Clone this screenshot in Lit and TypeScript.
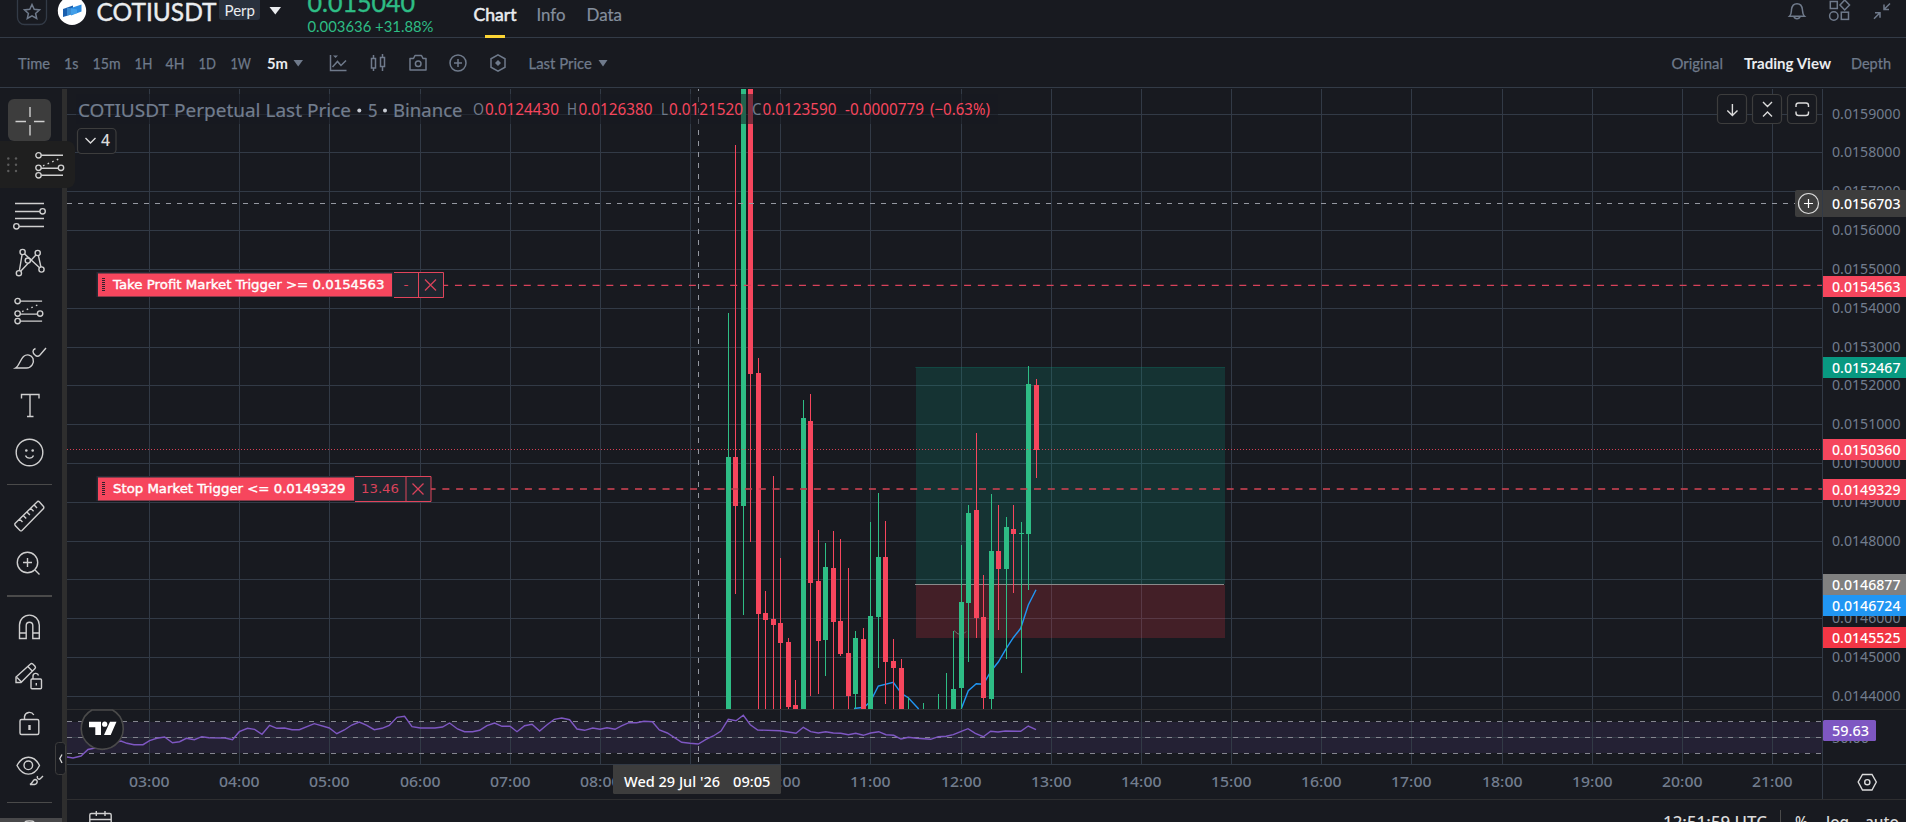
import { LitElement, html, svg, css } from "lit";
import { customElement } from "lit/decorators.js";

type Box = [number, number, number, number];

/** Text run fitted to a known width. */
const txt = (x: number, y: number, w: number, s: string, cls: string) =>
  svg`<text x=${x} y=${y} textLength=${w} lengthAdjust="spacingAndGlyphs" class=${cls}>${s}</text>`;

/** A slice of a bar or column; the content uses the page's coordinates. */
const cell = ([x, y, w, h]: Box, content: unknown) =>
  html`<svg class="cell" width=${w} height=${h} viewBox="${x} ${y} ${w} ${h}">${content}</svg>`;

const UP = "#2ebd85";
const DOWN = "#f6465d";

// x, wick top, wick bottom, body top, body bottom, rising
const CANDLES: number[][] = [
  [728, 313, 709, 457, 709, 1], [735, 145, 594, 457, 506, 0], [743, 89, 615, 89, 506, 1],
  [750, 89, 542, 89, 374, 0], [758, 358, 709, 373, 614, 0], [765, 591, 709, 613, 620, 0],
  [773, 476, 709, 619, 625, 0], [780, 558, 709, 623, 643, 0], [788, 638, 709, 642, 707, 0],
  [795, 680, 709, 705, 709, 0], [803, 400, 709, 418, 709, 1], [810, 394, 696, 421, 583, 0],
  [818, 530, 694, 581, 641, 0], [825, 543, 676, 567, 640, 1], [833, 531, 709, 568, 622, 0],
  [840, 539, 656, 621, 654, 0], [848, 568, 709, 653, 696, 0], [855, 631, 709, 638, 694, 1],
  [863, 628, 709, 639, 709, 0], [870, 522, 709, 616, 709, 1], [878, 493, 668, 557, 617, 1],
  [885, 521, 704, 557, 662, 0], [893, 639, 709, 661, 668, 0], [901, 659, 709, 668, 709, 0],
  [908, 697, 709, 709, 709, 1], [923, 703, 709, 709, 709, 1], [938, 694, 709, 709, 709, 1],
  [946, 673, 709, 709, 709, 1], [953, 631, 709, 689, 709, 1], [961, 545, 709, 602, 688, 1],
  [968, 505, 662, 513, 603, 1], [976, 433, 638, 510, 618, 0], [983, 575, 709, 617, 698, 0],
  [991, 494, 709, 551, 699, 1], [998, 505, 630, 551, 569, 0], [1006, 517, 659, 527, 569, 1],
  [1013, 505, 593, 529, 534, 0], [1021, 522, 673, 533, 534, 1], [1028, 366, 590, 384, 534, 1],
  [1036, 379, 478, 385, 450, 0],
];

const GRID_Y = [114, 152, 191, 230, 269, 308, 347, 385, 424, 463, 502, 541, 579, 618, 657, 696];
const GRID_X = Array.from({ length: 19 }, (_, i) => Math.floor(149.55 + i * 90.17));

const RSI =
  "67,757 73,758 81,756 88,749.5 96,747.7 104,749 112,743 121,741 127,743.3 134,744.7 143,744.7 149.6,740.7 156.8,738.3 164.6,737 172.5,742.7 179.6,741.7 186.4,738.3 194.3,739.7 201.8,736.7 209,737.7 225,738 232.5,739.7 239.3,731.7 247.5,728.3 254.6,729.3 262,734.3 269.6,725.3 276.8,728.3 284.6,728 292,729.7 299.3,729.7 314.3,723.7 329.3,728 336.8,733.7 344.3,730 351.8,725 359.3,722 366.8,725.3 374.3,729.7 382,728.3 389.3,725.3 397,717.3 404.6,716.3 412,726.7 420.4,728 435,728 442.5,727 449.6,723 457.5,729 464.6,731.7 472.5,731.7 479.6,730.3 487,725.7 494.6,723 502,726.3 510,726.3 517,731.7 524.6,725.7 532,724.3 539.6,731 546.8,725 554.3,719.3 561.8,718 569.6,719.7 577,729 584.6,730.3 592.7,728 600,729.3 607,727.7 615,729.3 622,725.7 629,722.7 636.7,722.7 644,721.3 652.3,721.7 659.3,730 667.3,733 681.7,742.3 690,743.3 698.3,744 706,739.3 713.3,736 721,731 728.3,719.3 736,720.7 743.3,715.3 750.3,724.7 757.7,730 780,730.7 796,733.3 803.3,727.3 810.7,731.7 818.3,733 825.7,731.7 833.3,733 840.7,733.3 848.3,734.7 855.7,733.3 863.3,735.3 870.7,733 878.7,731.7 886,734.7 893.7,735.3 901,739 908.3,737.3 916.7,738.3 930.7,739.3 938.3,736.7 946,736.3 953.3,734.7 961.3,731.3 968,728.7 975.3,733.3 983.3,736.7 990.7,731.3 998,732 1005.3,731 1020.7,731.3 1028.3,726 1036,729.7";

const MA1 = "854,708.5 864,707.3 870.3,701.7 878.3,686 893.3,682.3 901.3,693.3 908.3,697.7 918.7,709";
const MA2 = "961.3,708.7 968.3,690.7 976.3,683.7 983.3,684.3 991.3,670.7 998.3,662 1006.3,648.3 1013.3,637.7 1020.7,628.3 1028.3,605 1036,589.7";

const TAGS: [number, string, string][] = [
  [276, DOWN, "0.0154563"], [357, "#089981", "0.0152467"], [439, DOWN, "0.0150360"],
  [479, DOWN, "0.0149329"], [574, "#808080", "0.0146877"], [595, "#2196f3", "0.0146724"],
  [627, "#f23645", "0.0145525"],
];

const FIB = svg`<path d="M3 3.5H27.5M3 16.5H27.5M3 23.5H27.5" /><path d="M7.5 14L25 6.5" stroke-dasharray="1.6 3.4" />
  <g class="knot"><circle cx="3" cy="3.5" r="2.7" /><circle cx="3" cy="16" r="2.7" /><circle cx="25.5" cy="16" r="2.7" /><circle cx="3" cy="23.5" r="2.7" /></g>`;

@customElement("tool-rail")
class ToolRail extends LitElement {
  static styles = css`
    :host { display: flex; flex-direction: column; width: 62px; height: 733px; overflow: hidden; position: relative; }
    .cell { display: block; flex: none; fill: none; stroke: #cfcfcf; stroke-width: 1.4; }
    .knot { fill: #181a20; }
    .btn { fill: #3d3d3d; stroke: none; }
    .sep { stroke: none; fill: #4a4a4a; }
    .solid { fill: #cfcfcf; stroke: none; }
  `;

  render() {
    const c = (top: number, bottom: number, body: unknown) => cell([0, top, 62, bottom - top], body);
    return html`
      ${c(89, 145, svg`<rect x="8" y="99" width="43" height="42" rx="6" class="btn" />
        <path d="M30 107V117M30 125V135.500M15.500 121.500H26M34 121.500H44.500" />`)}
      ${c(145, 191, null)}
      ${c(191, 239, svg`<path d="M15 203.500H44M15 211.500H42M15 218.500H44M16 226.500H44" />
        <g class="knot"><circle cx="42.600" cy="211.300" r="2.700" /><circle cx="16.400" cy="226.300" r="2.700" /></g>`)}
      ${c(239, 286, svg`<path d="M19 273L22.500 252L41.500 269.500M37.800 253L41.500 269.500M19 273L37.800 253" />
        <g class="knot"><circle cx="22.600" cy="252" r="2.600" /><circle cx="37.700" cy="253" r="2.600" />
        <circle cx="27.800" cy="260.600" r="2.600" /><circle cx="18.900" cy="273.200" r="2.600" /><circle cx="41.500" cy="269.500" r="2.600" /></g>`)}
      ${c(286, 335, svg`<g transform="translate(14.600 297.600)">${FIB}</g>`)}
      ${c(335, 382, svg`<path d="M15.500 368C19 366 20 360 23.500 356.500C27 353.500 31.500 355 33 358.500C34.500 363 31.500 368 26.500 368ZM35.500 348.500C32 350 32.500 353 35 355C37 357 38.500 356.500 40 355L46 348" />`)}
      ${c(382, 429, svg`<path d="M21.500 398.500V394.500H39V398.500M30 394.500V416.500M27 416.500H33.500" />`)}
      ${c(429, 478, svg`<circle cx="29.500" cy="452.500" r="13.300" /><path d="M25.500 455.500C27 459 32 459 33.500 455.500" />
        <circle cx="26.300" cy="450.500" r="1.300" class="solid" /><circle cx="32.700" cy="450.500" r="1.300" class="solid" />`)}
      ${c(478, 490, svg`<rect x="7" y="484" width="45" height="1" class="sep" />`)}
      ${c(490, 540, svg`<path d="M15 523.500L37.500 501.500Q38.500 501 39.500 502L43.500 506.500Q44.200 507.500 43.500 508.500L22 530.500Q21 531.300 20 530.500L15.200 525.500Q14.600 524.500 15 523.500ZM19.500 519L22.500 522M23.200 515.500L26.200 518.500M26.900 512L29.900 515M30.600 508.300L33.600 511.300M34.200 505L37 508" />`)}
      ${c(540, 590, svg`<circle cx="27.500" cy="562.500" r="10.200" /><path d="M35 570L39.500 574.500M27.500 558V567M23 562.500H32" />`)}
      ${c(590, 601, svg`<rect x="7" y="595" width="45" height="2" class="sep" />`)}
      ${c(601, 652, svg`<path d="M19.500 638.500V625A9.800 9.800 0 0 1 39.300 625V638.500H32.800V625.500A3.300 3.300 0 0 0 26.200 625.500V638.500ZM19.500 633H26.200M32.800 633H39.300" />`)}
      ${c(652, 700, svg`<path d="M16 682.500V677L30.500 664Q31.500 663 32.800 664L35 666.200Q36 667.500 35 668.500L21 682.500ZM27.800 666.500L32.500 671.200M17 677.500L21.500 682" />
        <rect x="31" y="679" width="10.500" height="9.800" rx="1" /><path d="M33 679V676.500A2.800 2.800 0 0 1 38.500 675.500M36.300 683V685.500" />`)}
      ${c(700, 747, svg`<rect x="20" y="719.500" width="18.800" height="15" rx="1.500" /><path d="M24.500 719.500V716.500A5 5 0 0 1 33.800 715" />
        <path d="M29.500 725V730" stroke-width="2.400" />`)}
      ${c(747, 797, svg`<path d="M17 765.500C23 754.500 34 754.500 39.500 765.500C34 777 23 777 17 765.500Z" /><circle cx="28.300" cy="765.300" r="4.300" />
        <path d="M30 784.500C33 783 32.500 780 35 779.500C38 779.500 38 784 34.500 784.500ZM37.500 776C36.500 778.500 39 780 40.500 778.500L43 776" />`)}
      ${c(797, 822, svg`<rect x="7" y="802" width="45" height="1" class="sep" /><rect y="818" width="62" height="4" fill="#48484a" stroke="none" />
        <path d="M25 822C26 820.500 33 820.500 34 822" />`)}
    `;
  }
}

@customElement("price-chart")
class PriceChart extends LitElement {
  static styles = css`
    :host { display: block; }
    .cell { display: block; }
    text { font-family: "Noto Sans", sans-serif; white-space: pre; }
    .axis { font-size: 15.200px; fill: #727d8e; }
    .time { font-size: 15px; font-weight: 500; fill: #727d8e; }
    .tag { font-size: 15.200px; font-weight: 500; fill: #fff; }
    .name { font-size: 18.500px; fill: #727d8e; stroke: #727d8e; stroke-width: 0.2; }
    .key { font-size: 15.800px; fill: #6f7a8b; }
    .val { font-size: 15.800px; fill: #f6465d; }
    .four { font-size: 15.500px; fill: #dbdbdb; font-weight: 500; }
    .order { font-family: "DejaVu Sans", sans-serif; font-size: 13px; fill: #fff; stroke: #fff; stroke-width: 0.4; }
    .qty { font-family: "DejaVu Sans", sans-serif; font-size: 13px; fill: #d8425a; }
    .grid { fill: #323a46; }
    .box { fill: #181a20; stroke: #3d3d3d; stroke-width: 1.200; }
    .ink { fill: none; stroke: #dbdbdb; stroke-width: 1.400; }
    .ref { stroke: #85868f; stroke-dasharray: 5 6; }
    .cross { stroke: #9598a1; stroke-dasharray: 5 6; }
  `;

  private order(y: number, redW: number, textW: number, label: string, qtyX: number, sepX: number, endX: number, qty: unknown) {
    return svg`
      <rect x="96.500" y=${y - 1} width=${redW + 3} height="25" fill="#262c37" />
      <rect x="98" y=${y + 0.5} width=${redW} height="23" fill=${DOWN} />
      <path d="M103.500 ${y + 5}V${y + 19}" stroke="#33202c" stroke-width="3" stroke-dasharray="1 1" />
      ${txt(113, y + 16, textW, label, "order")}
      <rect x=${qtyX} y=${y - 0.500} width=${endX - qtyX} height="25" fill="#1f262f" />
      <path d="M${qtyX} ${y - 0.5}H${endX}V${y + 24.5}H${qtyX}M${sepX} ${y - 0.5}V${y + 24.5}" fill="none" stroke="#e0445b" />
      ${qty}
      <path d="M${endX - 18.500} ${y + 6.500}L${endX - 7.500} ${y + 17.500}M${endX - 7.500} ${y + 6.500}L${endX - 18.500} ${y + 17.500}" stroke="#d8425a" stroke-width="1.300" />`;
  }

  render() {
    return cell([67, 88, 1839, 712], svg`
      <rect x="67" y="722" width="1755" height="31" fill="#7e57c2" fill-opacity="0.130" />
      ${GRID_X.map((x) => svg`<rect x=${x} y="89" width="1" height="675" class="grid" />`)}
      ${GRID_Y.map((y) => svg`<rect x="67" y=${y} width="1755" height="1" class="grid" />`)}
      <rect x="67" y="737" width="1755" height="1" class="grid" />
      <rect x="67" y="709" width="1839" height="1" fill="#2e2e30" />
      <rect x="67" y="764" width="1839" height="1" class="grid" />
      <rect x="67" y="799" width="1839" height="1" fill="#2e2e30" />

      <rect x="916" y="367" width="309" height="217" fill="#089981" fill-opacity="0.200" />
      <rect x="915" y="367" width="310" height="1" fill="#089981" fill-opacity="0.200" />
      <rect x="916" y="585" width="309" height="53" fill="#f23645" fill-opacity="0.200" />
      <rect x="915" y="584" width="309" height="1" fill="#8a8a8a" />
      <polyline points="954,630.500 958,634 964,633.500 966,631.500" fill="none" stroke="#70706c" />

      <g fill="none" stroke="#2196f3" stroke-width="1.400"><polyline points=${MA1} /><polyline points=${MA2} /></g>
      ${CANDLES.map(([x, wt, wb, bt, bb, up]) => svg`<g fill=${up ? UP : DOWN}>
        <rect x=${x} y=${wt} width="1" height=${wb - wt} /><rect x=${x - 2} y=${bt} width="5" height=${bb - bt} /></g>`)}

      <path d="M67 449.500H1822" stroke="#f6465d" stroke-opacity="0.850" stroke-dasharray="1 2" />
      <path d="M443 285.400H1822" stroke="#d8425a" stroke-width="1.250" stroke-dasharray="7 6.760" stroke-dashoffset="1.800" />
      <path d="M431 489H1822" stroke="#c0404f" stroke-opacity="0.850" stroke-width="2" stroke-dasharray="7 6.760" stroke-dashoffset="2.400" />
      <path d="M67 203.500H1795" class="cross" />
      <path d="M698.500 89V762" class="cross" stroke-dashoffset="3" />

      <path d="M67 721.500H1822M67 737.500H1822M67 753.500H1822" class="ref" />
      <polyline points=${RSI} fill="none" stroke="#7e57c2" stroke-width="1.400" />
      <g><path d="M92 710H112.500A21 21 0 1 1 92 710Z" fill="#181a20" stroke="#4a4a4a" stroke-width="1.600" />
        <rect x="86" y="708" width="32" height="1" fill="#181a20" />
        <path d="M89 721.700H101V735H95.300V727.300H89ZM110 721.700H116.500L110.700 735H104Z" fill="#fff" /><circle cx="104.700" cy="724.200" r="2.600" fill="#fff" /></g>

      <rect x="76" y="94" width="922" height="30" fill="#181a20" fill-opacity="0.550" />
      ${txt(78, 116.5, 273, "COTIUSDT Perpetual Last Price", "name")}
      <circle cx="359.300" cy="110.500" r="2" fill="#c8ccd4" /><circle cx="385" cy="110.500" r="2" fill="#c8ccd4" />
      ${txt(368, 116.5, 9.5, "5", "name")}${txt(393, 116.5, 69.5, "Binance", "name")}
      ${txt(473, 115, 11, "O", "key")}${txt(485, 115, 74, "0.0124430", "val")}
      ${txt(567, 115, 10, "H", "key")}${txt(578.5, 115, 74, "0.0126380", "val")}
      ${txt(661, 115, 7, "L", "key")}${txt(669, 115, 74, "0.0121520", "val")}
      ${txt(752, 115, 9.5, "C", "key")}${txt(762.5, 115, 74, "0.0123590", "val")}
      ${txt(845, 115, 79, "-0.0000779", "val")}${txt(930, 115, 60, "(−0.63%)", "val")}

      <rect x="77.500" y="128.500" width="38.500" height="25" rx="4" class="box" />
      <path d="M85.500 138L90.500 143L95.500 138" class="ink" />${txt(101, 146, 9, "4", "four")}
      <g class="box"><rect x="1717.500" y="94.500" width="29" height="29" rx="4" /><rect x="1752.500" y="94.500" width="29" height="29" rx="4" /><rect x="1787.500" y="94.500" width="29" height="29" rx="4" /></g>
      <path d="M1732.400 104V115M1727.300 110.500L1732.400 115.500L1737.500 110.500M1763 102L1767.500 106.500L1772 102M1763 116.500L1767.500 112L1772 116.500
        M1796 107V105.500Q1796 103 1798.500 103H1806Q1808.500 103 1808.500 105.500V107M1796 111.500V113Q1796 115.500 1798.500 115.500H1806Q1808.500 115.500 1808.500 113V111.500" class="ink" />

      ${this.order(273, 294, 271.5, "Take Profit Market Trigger >= 0.0154563", 394, 418.5, 443.5, txt(403.5, 289, 5, "-", "qty"))}
      ${this.order(477, 256, 232.5, "Stop Market Trigger <= 0.0149329", 355, 406, 431, txt(361, 493, 38, "13.46", "qty"))}

      <rect x="1822" y="89" width="84" height="675" fill="#181a20" />
      <rect x="1822" y="89" width="1" height="710" class="grid" />
      <rect x="1822" y="709" width="84" height="1" fill="#2e2e30" />
      ${GRID_Y.map((y, i) => txt(1832, y + 5, 68.5, "0.0" + (159 - i) + "000", "axis"))}
      ${txt(1832, 742.5, 37, "50.00", "axis")}
      ${TAGS.map(([y, fill, s]) => svg`<rect x="1823" y=${y} width="83" height="21" fill=${fill} />${txt(1832, y + 16, 68.5, s, "tag")}`)}
      <rect x="1823" y="720" width="53" height="21" rx="1.500" fill="#7e57c2" />${txt(1832, 736, 37, "59.63", "tag")}
      <rect x="1795" y="190" width="112" height="27" rx="2" fill="#3d3d3d" /><rect x="1822" y="190" width="1" height="27" class="grid" />
      <circle cx="1808.500" cy="203.500" r="10" fill="none" stroke="#dbdbdb" stroke-width="1.200" />
      <path d="M1808.500 199V208M1804 203.500H1813" stroke="#fff" stroke-width="1.200" />
      ${txt(1832, 209, 68.5, "0.0156703", "tag")}

      ${GRID_X.map((x, i) => txt(x - 20, 787, 40.5, String(i + 3).padStart(2, "0") + ":00", "time"))}
      <path d="M613 765H781V792.500Q781 794 779.500 794H614.500Q613 794 613 792.500Z" fill="#3d3d3d" />
      ${txt(624, 787, 96, "Wed 29 Jul '26", "tag")}${txt(733, 787, 37.5, "09:05", "tag")}
      <path d="M1862.500 774.500H1872L1876.300 782L1872 790H1862.500L1858.200 782Z" class="ink" /><circle cx="1867.300" cy="782.200" r="2.600" class="ink" />
    `);
  }
}

@customElement("app-root")
class AppRoot extends LitElement {
  static styles = css`
    :host { display: block; width: 1906px; height: 822px; overflow: hidden; background: #181a20; position: relative; }
    .cell { display: block; flex: none; overflow: hidden; }
    .head, .bar, .body, .foot { display: flex; }
    .head { height: 37px; border-bottom: 1px solid #333b47; justify-content: space-between; }
    .bar { height: 49px; border-bottom: 1px solid #333b47; justify-content: space-between; }
    .group { display: flex; }
    .body { height: 734px; }
    tool-rail { margin-top: 1px; }
    .edge { width: 5px; margin-top: 1px; background: #2e2e2e; }
    .foot { justify-content: space-between; }
    text { font-family: Lato, sans-serif; white-space: pre; }
    .sym { font-size: 25px; fill: #eaecef; }
    .sym, .price { stroke-width: 0.4; }
    .sym { stroke: #eaecef; }
    .perp { font-size: 16px; fill: #eaecef; }
    .price { font-size: 25px; fill: #2ebd85; stroke: #2ebd85; }
    .chg { font-size: 15.500px; fill: #2ebd85; }
    .tab { font-size: 16.500px; fill: #848e9c; stroke: #848e9c; stroke-width: 0.2; }
    .tab.on { fill: #eaecef; stroke: #eaecef; stroke-width: 0.5; }
    .item { font-size: 16px; fill: #6f7a8b; stroke: #6f7a8b; stroke-width: 0.25; }
    .item.on { fill: #eaecef; font-weight: 700; stroke: none; }
    .line { fill: none; stroke: #6f7a8b; stroke-width: 1.500; }
    .frame { fill: none; stroke: #333b47; stroke-width: 1.300; }
    .end { font-family: "Noto Sans", sans-serif; font-size: 15.500px; font-weight: 500; fill: #dbdbdb; }
    .pale { fill: none; stroke: #cfcfcf; stroke-width: 1.400; }
    .float { position: absolute; left: 0; top: 141px; width: 75px; height: 47px; background: #1f1f1f; border-radius: 0 8px 8px 0; fill: none; stroke: #cfcfcf; stroke-width: 1.400; }
    .float .knot { fill: #1f1f1f; }
    .dots { fill: #5c5c5c; stroke: none; }
    .fold { position: absolute; left: 55px; top: 742px; fill: #181a20; stroke: #3d3d3d; }
  `;

  render() {
    const h = (x0: number, x1: number, body: unknown) => cell([x0, 0, x1 - x0, 38], body);
    const b = (x0: number, x1: number, body: unknown) => cell([x0, 38, x1 - x0, 49], body);
    const items: [number, number, string, number, number][] = [
      [0, 57, "Time", 18, 32], [57, 86, "1s", 64, 14.5], [86, 128, "15m", 92.5, 28], [128, 160, "1H", 134.5, 18],
      [160, 192, "4H", 165.5, 19], [192, 224, "1D", 198.5, 17.5], [224, 259, "1W", 230.5, 20.5],
    ];
    return html`
      <div class="head">
        <div class="group">
          ${h(0, 52, svg`<rect x="17.500" y="-6" width="29" height="30.500" rx="7" class="frame" />
            <path d="M32 4.500L34.200 9.300L39.500 9.900L35.600 13.400L36.700 18.500L32 15.900L27.300 18.500L28.400 13.400L24.500 9.900L29.800 9.300Z" class="line" />`)}
          ${h(52, 92, svg`<circle cx="72" cy="10.700" r="14.200" fill="#fff" /><path d="M63 9L73 5.500V14L63 17Z" fill="#1b5fae" /><path d="M71 8L81.500 4.500V11.500L71 15.500Z" fill="#2b8be0" /><path d="M67 7.600L77 9.500V13.500L67 15.500Z" fill="#56b0f0" fill-opacity="0.550" />`)}
          ${h(92, 218, txt(96.5, 21, 120, "COTIUSDT", "sym"))}
          ${h(218, 264, svg`<rect x="219" y="-4" width="41" height="24" rx="3" fill="#29313d" />${txt(224.5, 16, 30.5, "Perp", "perp")}`)}
          ${h(264, 300, svg`<path d="M269.500 7H281L275.300 14.500Z" fill="#eaecef" />`)}
          ${h(300, 460, svg`${txt(307.5, 12, 107.5, "0.015040", "price")}${txt(307.5, 32, 126, "0.003636 +31.88%", "chg")}`)}
          ${h(460, 525, svg`${txt(473.5, 21, 43, "Chart", "tab on")}<rect x="485" y="35" width="20" height="3" fill="#fcd535" />`)}
          ${h(525, 575, txt(536.5, 21, 29, "Info", "tab"))}
          ${h(575, 630, txt(586.5, 21, 35.5, "Data", "tab"))}
        </div>
        <div class="group">
          ${h(1780, 1820, svg`<path d="M1789.500 16.300C1791.500 14.500 1791.300 12.500 1791.500 9.500C1792 5.500 1794 3.700 1797 3.700C1800 3.700 1802 5.500 1802.400 9.500C1802.600 12.500 1802.500 14.500 1804.500 16.300ZM1794 16.500Q1794.500 18.700 1797 18.700Q1799.500 18.700 1800 16.500" class="line" />`)}
          ${h(1820, 1860, svg`<g class="line"><rect x="1830.300" y="1.500" width="7" height="7" /><path d="M1844.700 0L1849.500 5L1844.700 10L1840 5Z" /><circle cx="1833.800" cy="16" r="4.200" /><rect x="1841.300" y="12.200" width="7.200" height="7.200" /></g>`)}
          ${h(1860, 1906, svg`<path d="M1890 3.500L1884.500 9M1884 4.500V9.500H1889M1874 18.700L1879.500 13.200M1875 12.700H1880V17.700" class="line" />`)}
        </div>
      </div>
      <div class="bar">
        <div class="group">
          ${items.map(([x0, x1, s, x, w]) => b(x0, x1, txt(x, 69, w, s, "item")))}
          ${b(259, 316, svg`${txt(267, 69, 21, "5m", "item on")}<path d="M293.500 60H303L298.200 66.500Z" fill="#6f7a8b" />`)}
          ${b(316, 358, svg`<path d="M330.500 55V70.500H346.500M332.500 67L337.500 61.500L341 65.500L346 60.500" class="line" /><path d="M333 55.500H338L335.500 58Z" fill="#6f7a8b" />`)}
          ${b(358, 398, svg`<path d="M371.500 58.500H375.500V68H371.500ZM373.500 55V58.500M373.500 68V71M380.500 57.500H384.500V66.500H380.500ZM382.500 54V57.500M382.500 66.500V71" class="line" />`)}
          ${b(398, 438, svg`<path d="M410 58.500H413.500L415 55.500H421.500L423 58.500H426V70H410Z" class="line" stroke-linejoin="round" /><circle cx="418.200" cy="63.800" r="2.800" class="line" />`)}
          ${b(438, 478, svg`<circle cx="458" cy="63" r="8" class="line" /><path d="M458 59V67M454 63H462" class="line" />`)}
          ${b(478, 518, svg`<path d="M498 54.800L505 58.800V67.200L498 71.200L491 67.200V58.800Z" class="line" /><path d="M498 60L501 63L498 66L495 63Z" fill="#6f7a8b" />`)}
          ${b(518, 620, svg`${txt(528.5, 69, 63.5, "Last Price", "item")}<path d="M598.500 60H607.500L603 66.500Z" fill="#6f7a8b" />`)}
        </div>
        <div class="group">
          ${b(1660, 1735, txt(1671.5, 69, 51.5, "Original", "item"))}
          ${b(1735, 1840, txt(1744, 69, 87, "Trading View", "item on"))}
          ${b(1840, 1906, txt(1851, 69, 40, "Depth", "item"))}
        </div>
      </div>
      <div class="body">
        <tool-rail></tool-rail>
        <div class="edge"></div>
        <div>
          <price-chart></price-chart>
          <div class="foot">
            ${cell([67, 800, 80, 22], svg`<path d="M89.800 824V815Q89.800 813.500 91.300 813.500H109.700Q111.200 813.500 111.200 815V824M90 819.500H111M96.300 811V816M105 811V816" class="pale" />`)}
            ${cell([1650, 800, 256, 22], svg`${txt(1663, 828, 104, "12:51:59 UTC", "end")}<rect x="1780" y="810" width="1" height="12" fill="#4a4a4a" />
              ${txt(1795, 828, 13, "%", "end")}${txt(1826, 828, 23, "log", "end")}${txt(1865, 828, 34, "auto", "end")}`)}
          </div>
        </div>
      </div>
      <svg class="float" viewBox="0 141 75 47"><g class="dots"><circle cx="8.300" cy="158.500" r="1.200" /><circle cx="16" cy="158.500" r="1.200" /><circle cx="8.300" cy="164.700" r="1.200" /><circle cx="16" cy="164.700" r="1.200" /><circle cx="8.300" cy="171" r="1.200" /><circle cx="16" cy="171" r="1.200" /></g>
        <g transform="translate(35.500 151.800)">${FIB}</g></svg>
      <svg class="fold" width="11" height="33" viewBox="55 742 11 33"><rect x="55.500" y="742.500" width="10" height="32" rx="3" /><path d="M62 754.500L59.800 758.500L62 763" fill="none" stroke="#dbdbdb" stroke-width="1.300" /></svg>
    `;
  }
}
